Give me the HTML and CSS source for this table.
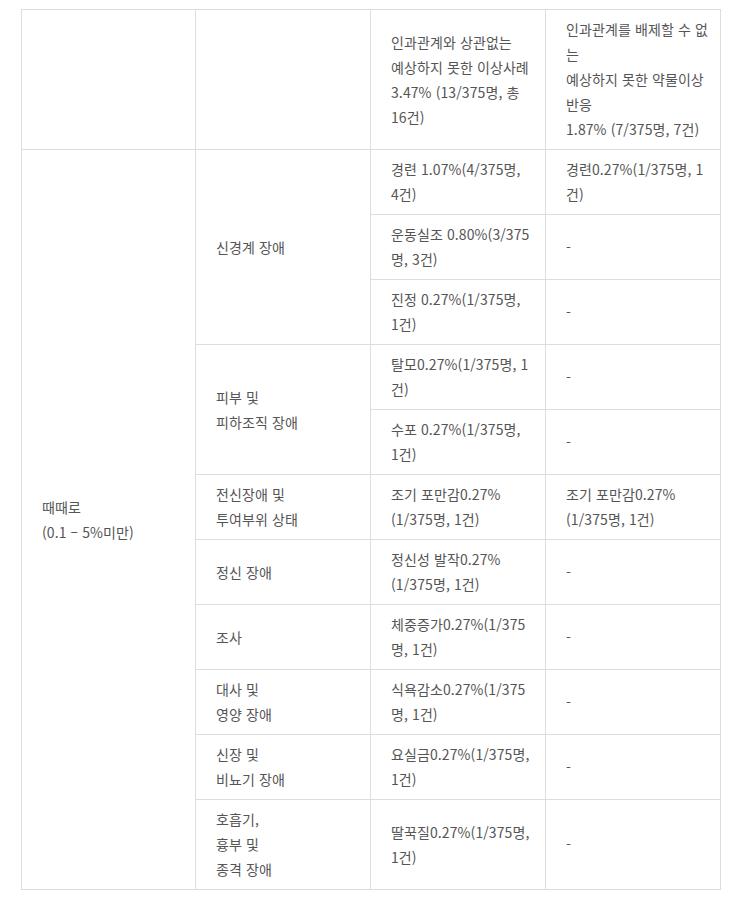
FILE: index.html
```html
<!DOCTYPE html>
<html lang="ko">
<head>
<meta charset="utf-8">
<title>이상사례</title>
<link rel="stylesheet" href="styles.css">
</head>
<body>
<table class="ae-table">
  <colgroup>
    <col class="c1"><col class="c2"><col class="c3"><col class="c4">
  </colgroup>
  <tr class="head">
    <td></td>
    <td></td>
    <td>인과관계와 상관없는<br>예상하지 못한 이상사례<br>3.47% (13/375명, 총<br>16건)</td>
    <td>인과관계를 배제할 수 없<br>는<br>예상하지 못한 약물이상<br>반응<br>1.87% (7/375명, 7건)</td>
  </tr>
  <tr>
    <td rowspan="11">때때로<br>(0.1 – 5%미만)</td>
    <td rowspan="3">신경계 장애</td>
    <td>경련 1.07%(4/375명,<br>4건)</td>
    <td>경련0.27%(1/375명, 1<br>건)</td>
  </tr>
  <tr>
    <td>운동실조 0.80%(3/375<br>명, 3건)</td>
    <td>-</td>
  </tr>
  <tr>
    <td>진정 0.27%(1/375명,<br>1건)</td>
    <td>-</td>
  </tr>
  <tr>
    <td rowspan="2">피부 및<br>피하조직 장애</td>
    <td>탈모0.27%(1/375명, 1<br>건)</td>
    <td>-</td>
  </tr>
  <tr>
    <td>수포 0.27%(1/375명,<br>1건)</td>
    <td>-</td>
  </tr>
  <tr>
    <td>전신장애 및<br>투여부위 상태</td>
    <td>조기 포만감0.27%<br>(1/375명, 1건)</td>
    <td>조기 포만감0.27%<br>(1/375명, 1건)</td>
  </tr>
  <tr>
    <td>정신 장애</td>
    <td>정신성 발작0.27%<br>(1/375명, 1건)</td>
    <td>-</td>
  </tr>
  <tr>
    <td>조사</td>
    <td>체중증가0.27%(1/375<br>명, 1건)</td>
    <td>-</td>
  </tr>
  <tr>
    <td>대사 및<br>영양 장애</td>
    <td>식욕감소0.27%(1/375<br>명, 1건)</td>
    <td>-</td>
  </tr>
  <tr>
    <td>신장 및<br>비뇨기 장애</td>
    <td>요실금0.27%(1/375명,<br>1건)</td>
    <td>-</td>
  </tr>
  <tr>
    <td>호흡기,<br>흉부 및<br>종격 장애</td>
    <td>딸꾹질0.27%(1/375명,<br>1건)</td>
    <td>-</td>
  </tr>
</table>
</body>
</html>
```

FILE: styles.css
```css
html, body {
  margin: 0;
  padding: 0;
  background: #ffffff;
}

body {
  font-family: "Noto Sans CJK KR", "Noto Sans", sans-serif;
  font-size: 14px;
  color: #555555;
}

.ae-table {
  border-collapse: collapse;
  table-layout: fixed;
  width: 700px;
  margin: 9px 0 0 21px;
}

.ae-table .c1 { width: 174px; }
.ae-table .c2 { width: 175px; }
.ae-table .c3 { width: 175px; }
.ae-table .c4 { width: 175px; }

.ae-table td {
  border: 1px solid #dddddd;
  padding: 7px 6px 7px 20px;
  line-height: 25px;
  vertical-align: middle;
  text-align: left;
  letter-spacing: 0.1px;
  white-space: nowrap;
}
```
